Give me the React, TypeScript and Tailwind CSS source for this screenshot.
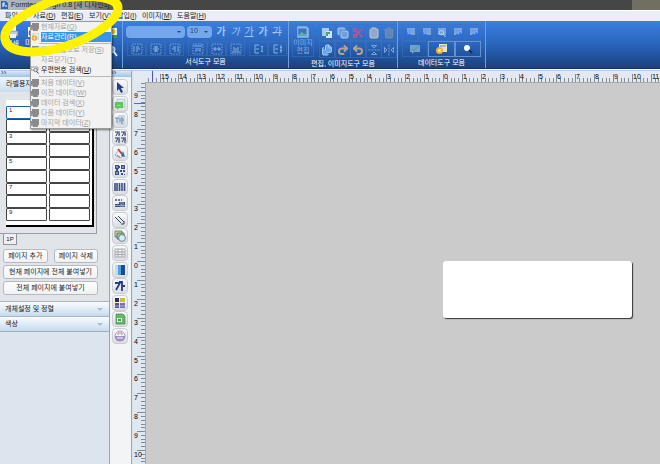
import React, { useEffect, useState } from "react";
import {
  Clipboard,
  Copy,
  Files,
  FlipHorizontal2,
  FlipVertical2,
  Redo2,
  Scissors,
  Trash2,
  Undo2,
} from "lucide-react";

const UNIT = 18.9;

type MenuEntry = { label: string; hotkey: string; icon?: boolean; active?: boolean; enabled?: boolean } | null;

const dataMenu: MenuEntry[] = [
  { label: "현재자료", hotkey: "Q", icon: true },
  { label: "자료관리", hotkey: "R", icon: true, active: true },
  null,
  { label: "다른이름으로 저장", hotkey: "S", icon: true },
  { label: "자료닫기", hotkey: "T" },
  { label: "우편번호 검색", hotkey: "U", icon: true, enabled: true },
  null,
  { label: "처음 데이터", hotkey: "V", icon: true },
  { label: "이전 데이터", hotkey: "W", icon: true },
  { label: "데이터 검색", hotkey: "X", icon: true },
  { label: "다음 데이터", hotkey: "Y", icon: true },
  { label: "마지막 데이터", hotkey: "Z", icon: true },
];

function Hotkey({ text, k }: { text: string; k: string }) {
  return (
    <>
      {text}(<u>{k}</u>)
    </>
  );
}

function EntryIcon({ entry }: { entry: NonNullable<MenuEntry> }) {
  if (!entry.icon) return <span className="w-2" />;
  if (entry.active)
    return (
      <svg viewBox="0 0 8 8" className="size-2">
        <path d="M2 0h6v6H2z" fill="#e8edf4" stroke="#8aa0bc" strokeWidth=".5" />
        <circle cx="3.4" cy="5" r="2.7" fill="#eda72b" />
        <path d="M2 5h3M3.4 3.6v3" stroke="#fff0a0" strokeWidth=".8" />
      </svg>
    );
  if (entry.enabled)
    return (
      <svg viewBox="0 0 8 8" className="size-2">
        <path d="M0 1h7v3H0z" fill="#f9f9f9" stroke="#777" strokeWidth=".7" />
        <circle cx="4.5" cy="4" r="1.7" fill="#e4edf8" stroke="#555" strokeWidth=".7" />
        <path d="m5.6 5.3 2 2.2" stroke="#333" />
      </svg>
    );
  return (
    <svg viewBox="0 0 8 8" className="size-2">
      <path d="M1 0h7v6H7v2H2V7H0V2h1z" fill="#8b8b8b" />
      <path d="M0 6h2M6 7h2" stroke="#bbb" strokeWidth=".7" />
    </svg>
  );
}

function DropMenu() {
  return (
    <div role="menu" className="absolute top-full left-0 z-10 flex w-[82px] flex-col border border-[#9a9a9a] bg-[#f2f2f2] shadow-[1px_1px_2px_rgba(0,0,0,.5)]">
      {dataMenu.map((e, i) =>
        e === null ? (
          <div key={i} className="my-px ml-2 h-px bg-[#b9b9b9]" />
        ) : (
          <button
            key={i}
            role="menuitem"
            className={`flex h-[10px] items-center gap-[2px] text-left whitespace-nowrap ${
              e.active ? "text-white" : e.enabled ? "text-[#222]" : "text-[#a3a3a3]"
            }`}
          >
            <EntryIcon entry={e} />
            <span className={`h-full flex-1 leading-[10px] ${e.active ? "bg-[#3596ec]" : ""}`}>
              <Hotkey text={e.label} k={e.hotkey} />
            </span>
          </button>
        ),
      )}
    </div>
  );
}

function MenuBar() {
  const menus = [
    ["파일", "F"],
    ["자료", "D"],
    ["편집", "E"],
    ["보기", "V"],
    ["삽입", "I"],
    ["이미지", "M"],
    ["도움말", "H"],
  ];
  return (
    <nav className="flex h-[11px] border-t border-white bg-[#e9eef6] pl-[2px] text-[#222]">
      {menus.map(([t, k]) => (
        <div key={t} className={`relative ${t === "이미지" || t === "도움말" ? "w-[35px]" : t === "삽입" ? "w-[25px]" : "w-[28px]"}`}>
          <button className="h-[10px] w-full px-[3px] text-left leading-[10px] whitespace-nowrap">
            <Hotkey text={t} k={k} />
          </button>
          {t === "자료" && <DropMenu />}
        </div>
      ))}
    </nav>
  );
}

function RibbonGroup({ label, className, children }: { label: string; className: string; children: React.ReactNode }) {
  return (
    <section className={`flex shrink-0 flex-col border-r border-[#6c9ee2] ${className}`}>
      <div className="h-[37px]">{children}</div>
      <h2 className="text-center leading-[12px] text-white">{label}</h2>
    </section>
  );
}

const cell = "flex items-center justify-center border border-[#3d72bd]/60";

function AlignIcon({ kind }: { kind: number }) {
  const inner = [
    "M3 3v6M5 4h3M5 6h4M5 8h2",
    "M6 3v6M4 4h4M3 6h6M4 8h4",
    "M9 3v6M4 4h3M3 6h4M5 8h2",
    "M2 3h8M4 5v4M6 5v3M8 5v4",
    "M2 6h8M4 4v4M8 4v4",
    "M2 9h8M4 4v4M6 5v3M8 4v4",
    "M6 2H2v8h4M3 6h3M9 3v6M8 4l1-1 1 1M8 8l1 1 1-1",
    "M6 2H2v8h4M3 6h3M9 2v8M8 4l1 1 1-1M8 8l1-1 1 1",
  ][kind];
  return (
    <svg viewBox="0 0 12 12" className="size-3" fill="none" stroke="#86b2ea">
      {kind < 6 && <path d="M1 1h10v10H1z" strokeDasharray="1.5 1" strokeWidth=".8" />}
      <path d={inner} />
    </svg>
  );
}

function DataIcon({ kind }: { kind: number }) {
  return (
    <svg viewBox="0 0 12 12" className="size-3">
      <path d="M3 1h8v7H3z" fill="#79a6df" />
      <path d="M3 3.5h8M5.5 1v7" stroke="#5f92d6" strokeWidth=".5" />
      {kind === 2 ? (
        <g fill="none" stroke="#b9d2f2">
          <circle cx="6.5" cy="5.5" r="2.2" />
          <path d="m8 7 2.5 3" />
        </g>
      ) : (
        <path d={kind < 2 ? "M7 8H1m0 0 2.5-2.5M1 8l2.5 2.5" : "M5 8h6m0 0L8.5 5.5M11 8l-2.5 2.5"} fill="none" stroke="#2c6ae0" strokeWidth="1.3" />
      )}
      {kind === 0 && <path d="M.5 5v6" stroke="#2c6ae0" />}
      {kind === 4 && <path d="M11.5 5v6" stroke="#2c6ae0" />}
    </svg>
  );
}

function Ribbon() {
  return (
    <div className="flex h-12 overflow-hidden border-b border-[#12346a] bg-linear-to-b from-[#3b7fe0] via-[#2a65bb] to-[#19427f] text-white">
      <RibbonGroup label="" className="w-[123px]">
        <div className="flex h-full items-start pt-1 pl-[3px]">
          <button className="flex w-[19px] flex-col items-center">
            <svg viewBox="0 0 12 14" className="h-[14px] w-3">
              <path d="M3 1h6v5H3z" fill="#fff" />
              <path d="M1 6h10v5H1z" fill="#c3c9d1" stroke="#77808e" strokeWidth=".7" />
              <path d="M3 9h6v4H3z" fill="#eef2f6" />
            </svg>
            <span className="leading-[9px]">인쇄</span>
          </button>
          <button className="flex w-[19px] flex-col items-center">
            <svg viewBox="0 0 12 14" className="h-[14px] w-3">
              <path d="M2 2h7v10H2z" fill="#fff" />
              <circle cx="6" cy="8" r="3" fill="#a9cdf1" stroke="#41536e" />
              <path d="m8 10 3 3" stroke="#41536e" strokeWidth="1.5" />
            </svg>
            <span className="leading-[8px]">미리<br />보기</span>
          </button>
          <div className="ml-auto flex w-[14px] flex-col gap-[2px]">
            <button aria-label="그림" className="flex h-4 items-center">
              <svg viewBox="0 0 10 12" className="h-3 w-[10px]">
                <path d="M2 1h7v10H2z" fill="#e8f2e0" />
                <circle cx="5" cy="4.5" r="2.5" fill="#e6bf27" />
                <path d="M1 8h8v3H1z" fill="#3e9c3a" />
              </svg>
            </button>
            <button aria-label="확대" className="flex h-4 items-center">
              <svg viewBox="0 0 10 12" className="h-3 w-[10px]">
                <circle cx="4" cy="4.5" r="3" fill="#8ab9ee" stroke="#dceaff" />
                <path d="m6 7 3 4" stroke="#fff" strokeWidth="1.5" />
              </svg>
            </button>
          </div>
        </div>
      </RibbonGroup>

      <RibbonGroup label="서식도구 모음" className="w-[166px]">
        <div className="flex h-[20px] items-center gap-[2px] pl-[3px] pt-px">
          <div className="relative flex">
            <select aria-label="글꼴" className="h-3 w-[59px] appearance-none rounded-sm bg-[#75a7ed] text-[#29496f]">
              <option></option>
            </select>
            <span className="pointer-events-none absolute top-[5px] right-1 border-x-2 border-t-2 border-x-transparent border-t-[#24477a]" />
          </div>
          <div className="relative flex">
            <select aria-label="글꼴 크기" className="h-3 w-[25px] appearance-none rounded-sm bg-[#75a7ed] pl-[3px] text-[#29496f]">
              <option>10</option>
            </select>
            <span className="pointer-events-none absolute top-[5px] right-1 border-x-2 border-t-2 border-x-transparent border-t-[#24477a]" />
          </div>
          <div className="flex text-[10px] text-[#a3c5f2]">
            {["font-bold", "italic", "underline", "font-bold", "line-through"].map((c, i) => (
              <button key={i} className={`w-[14px] leading-[12px] ${c}`}>가</button>
            ))}
          </div>
        </div>
        <div className="flex h-[15px] pl-1">
          {[[0, 1, 2], [3, 4, 5], [6, 7]].map((g, gi) => (
            <div key={gi} className="mr-1 flex">
              {g.map((k) => (
                <button key={k} aria-label={`정렬 ${k + 1}`} className={`w-[19px] ${cell}`}>
                  <AlignIcon kind={k} />
                </button>
              ))}
            </div>
          ))}
        </div>
      </RibbonGroup>

      <RibbonGroup label="편집, 이미지도구 모음" className="w-[109px]">
        <div className="flex gap-[5px] pt-[3px] pl-[3px]">
          <button className="flex h-[33px] w-[22px] shrink-0 flex-col items-center border border-[#3d72bd]/60 text-[#86afe6]">
            <svg viewBox="0 0 12 12" className="h-[14px] w-[14px] shrink-0">
              <path d="M1 1h8l2 2v8H1z" fill="#8db4e5" />
              <path d="M2 3h7v6H2z" fill="#3b75c4" />
              <path d="m2 9 3-3 2 2 2-1v2z" fill="#60b39a" />
            </svg>
            <span className="leading-[8px] whitespace-nowrap">이미지<br />편집</span>
          </button>
          <div className="grid grid-cols-5">
            {[
              <svg key="a" viewBox="0 0 12 12" className="size-3"><path d="M1 1h7v8H1z" fill="#a7c9f2" /><path d="M5 4h6v7H5z" fill="#d4e4f8" /><path d="M6 9V6h3" stroke="#47a36b" strokeWidth="2" fill="none" /></svg>,
              <Copy key="b" className="size-3" color="#b0cdf3" fill="#709fdc" />,
              <Scissors key="c" className="size-3" color="#b8588a" strokeWidth={3} />,
              <Clipboard key="d" className="size-3" color="#c3c4c8" fill="#8fa9cc" />,
              <Trash2 key="e" className="size-3" color="#748db5" fill="#6484b4" />,
              <Files key="f" className="size-3" color="#a4c9f4" fill="#6ba4e8" />,
              <Redo2 key="g" className="size-3" color="#b5a294" strokeWidth={4} />,
              <Undo2 key="h" className="size-3" color="#b5a294" strokeWidth={4} />,
              <FlipVertical2 key="i" className="size-3" color="#7ba4da" />,
              <FlipHorizontal2 key="j" className="size-3" color="#7ba4da" />,
            ].map((icon, i) => (
              <button key={i} aria-label={`편집 도구 ${i + 1}`} className={`h-[17px] w-4 ${cell}`}>{icon}</button>
            ))}
          </div>
        </div>
      </RibbonGroup>

      <RibbonGroup label="데이터도구 모음" className="w-[88px]">
        <div className="flex flex-col px-1 pt-[3px]">
          <div className="flex">
            {[0, 1, 2, 3, 4].map((k) => (
              <button key={k} aria-label={`데이터 이동 ${k + 1}`} className={`h-[17px] flex-1 ${cell}`}><DataIcon kind={k} /></button>
            ))}
          </div>
          <div className="flex">
            <button aria-label="현재자료" className={`h-4 flex-1 ${cell}`}>
              <svg viewBox="0 0 12 12" className="size-3"><path d="M1 2h10v7H1z" fill="#72a3cf" /><path d="m3 6 2 2 5-6" fill="none" stroke="#499b88" /><path d="M3 9v2l2-2" fill="#72a3cf" /></svg>
            </button>
            <button aria-label="자료관리" className="flex h-4 flex-1 items-center justify-center border border-[#6492d0]">
              <svg viewBox="0 0 12 12" className="size-3"><path d="M4 1h8v8H4z" fill="#eee3b7" /><path d="M5 3h6" stroke="#5c8fd1" /><circle cx="4.5" cy="7.5" r="3.5" fill="#efb230" /><circle cx="4.5" cy="7.5" r="1.4" fill="#fff0ae" /></svg>
            </button>
            <button aria-label="우편번호 검색" className="flex h-4 flex-1 items-center justify-center border border-[#6492d0]">
              <svg viewBox="0 0 12 12" className="size-3"><circle cx="5" cy="5" r="3" fill="#f4f8ff" /><path d="m7 7 3 3" stroke="#172e50" strokeWidth="1.8" /></svg>
            </button>
          </div>
        </div>
      </RibbonGroup>
    </div>
  );
}

function Strip() {
  return <div className="h-[6px] shrink-0 bg-linear-to-b from-[#d7e8f8] to-[#9fc3e6] pl-px text-[8px] leading-[4px] text-[#174474]">››</div>;
}

const pushButton = "h-[14px] rounded-[3px] border border-[#b6bac0] bg-linear-to-b from-white to-[#eff1f3] leading-[12px] text-[#222]";

function SidePanel() {
  return (
    <aside className="flex w-[110px] shrink-0 flex-col border-r border-[#93a5b9] bg-[#dce4ed]">
      <Strip />
      <h3 className="h-[15px] bg-linear-to-b from-[#eef6fd] to-[#c7dcf0] pl-[6px] leading-[14px] text-[#222]">라벨용지</h3>
      <div className="h-[209px] bg-[#e1e5ea]">
        <div className="mr-3 h-[142px] border-r border-b border-[#9a9ea5] pt-2 pl-[6px]">
          <div className="mr-[2px] h-[127px] border-r-2 border-b-2 border-black bg-white pt-[6px] pr-[2px]">
            <ol className="grid h-[115px] grid-cols-2 grid-rows-9 gap-x-[2px]">
              {Array.from({ length: 18 }, (_, i) => (
                <li
                  key={i}
                  className={`rounded-[1px] border pl-[2px] text-[6px] leading-[7px] text-[#222] ${i === 0 ? "border-[#1d62a5]" : "border-[#444]"}`}
                >
                  {i % 4 === 0 ? i / 2 + 1 : ""}
                </li>
              ))}
            </ol>
          </div>
        </div>
        <button className="ml-[3px] block h-[11px] w-[14px] border border-t-0 border-[#8d9299] bg-[#eef0f3] text-[6px] leading-[9px] text-[#222]">1P</button>
        <div className="mt-[4px] mr-[11px] ml-[3px] grid grid-cols-2 gap-x-[6px] gap-y-[2px]">
          <button className={pushButton}>페이지 추가</button>
          <button className={pushButton}>페이지 삭제</button>
          <button className={`col-span-2 ${pushButton}`}>현재 페이지에 전체 붙여넣기</button>
          <button className={`col-span-2 ${pushButton}`}>전체 페이지에 붙여넣기</button>
        </div>
      </div>
      {["개체설정 및 정렬", "색상"].map((t) => (
        <button key={t} className="flex h-[15px] items-center justify-between border-t border-[#a9b5c3] bg-linear-to-b from-[#fafcfe] to-[#c6dbef] pr-[6px] pl-[5px] text-[#222]">
          {t}
          <span className="border-x-3 border-t-3 border-x-transparent border-t-[#a9bed4]" />
        </button>
      ))}
      <div className="border-t border-[#9fafc1]" />
    </aside>
  );
}

const N = "#3a4f84";
const tools: [string, React.ReactNode][] = [
  ["선택", <path key="0" d="M3 1v9l2-2 2 4 2-1-2-4h3z" fill="#213e8c" />],
  ["그림", <g key="1"><path d="M3 1h8v8H3z" fill="#d9e6f2" stroke="#8ca7be" strokeWidth=".5" /><path d="M1 4h8v6H5l-2 2v-2H1z" fill="#58c94c" /><path d="m3 8 2-1 2 1" stroke="#9be58c" fill="none" /></g>],
  ["문서", <g key="2"><path d="M4 1h7v10H4z" fill="#cbd6e6" /><path d="M1 4h4M3 4v5M6 4v4M8 3v7M8 6h2" stroke="#6f87ab" /></g>],
  ["문자열", <g key="3" stroke="#25396e" fill="none"><path d="M1 1h3L2 5M5 0v5M5 3h1M7 1h3v1L8 5M11 0v5M11 3h1M1 7h3l-2 4M5 6v6M5 9h1M7 7h3v1l-2 3M11 6v6M11 9h1" /></g>],
  ["도형", <g key="4"><path d="m1 8 4-5 4 6-3 2z" fill="#f2f5f9" stroke="#7b8eab" strokeWidth=".7" /><path d="m4 2 4 5" stroke="#c44438" strokeWidth="2" /><path d="m9 4 2 6-4-1z" fill="#376aa4" /><path d="m3 8 3 2" stroke="#d46056" /></g>],
  ["QR 코드", <g key="5" fill={N}><path d="M1 1h4v4H1zM7 1h4v4H7zM1 7h4v4H1zM6 6h2v2H6zM9 6h2v2H9zM7 9h2v2H7zM10 10h1v1h-1zM5 2h1v2H5zM2 5h2v2H2z" /><path d="M2 2h2v2H2zM8 2h2v2H8zM2 8h2v2H2z" fill="#8493ba" /></g>],
  ["바코드", <path key="6" d="M1 2v8M3 2v8M5.5 2v8M8 2v8M10.5 2v8" stroke={N} strokeWidth="1.6" />],
  ["일련번호", <g key="7"><path d="M1 3h2M4 3h2M7 3h1" stroke={N} strokeWidth="1.3" /><path d="M5 5h6v5H5zM1 7h4v3H1z" fill={N} /><path d="M7 5v5M9 5v5M1 8.5h10" stroke="#b4c2dc" strokeWidth=".7" /></g>],
  ["선", <path key="8" d="m1 3 6 6M4 2l6 6M7 10h3V7" stroke="#304168" fill="none" />],
  ["도형 모음", <g key="9" stroke="#496b67" strokeWidth=".8"><path d="M1 1h7v6H1z" fill="#e4d98f" /><path d="M3 3h7v6H3z" fill="#93c2aa" /><circle cx="8" cy="8" r="3.4" fill="#d9edf6" /></g>],
  ["표", <path key="10" d="M1 2h10v8H1zM1 5h10M1 7.5h10M4 2v8M8 2v8" stroke="#a3a8af" fill="#f2f2f2" />],
  ["그라데이션", <g key="11"><path d="M1 1h3v10H1z" fill="#b5e0fb" /><path d="M4 1h3v10H4z" fill="#569fd8" /><path d="M7 1h4v10H7z" fill="#164b9d" /></g>],
  ["글자 꾸미기", <path key="12" d="M1 3h5L2 10M8 1v10M8 6h3M5 2h3" stroke="#233d86" strokeWidth="1.8" fill="none" />],
  ["색상표", <g key="13"><path d="M1 1h4v4H1z" fill="#2b2f4f" /><path d="M6 1h5v4H6z" fill="#c8bd42" /><path d="M1 6h4v5H1z" fill="#5b508e" /><path d="M6 6h5v5H6z" fill="#776eb6" /><path d="M1 9h10" stroke="#ddd" strokeWidth=".6" /></g>],
  ["엑셀", <g key="14"><path d="M2 1h7l2 2v8H2z" fill="#67b767" stroke="#3d8848" strokeWidth=".7" /><path d="M3 5h5v4H3z" fill="#e5f4e0" /><path d="m4 6 3 2M7 6 4 8" stroke="#2d7940" /></g>],
  ["스탬프", <g key="15"><circle cx="6" cy="6" r="5" fill="#f3f0f8" stroke="#8679ae" strokeWidth=".7" /><path d="M1 6h10v2l-2 3H3L1 8z" fill="#9b8fc6" /><path d="M3 8h6" stroke="#fff" /><path d="M4 5V3h4v2" stroke="#c58c8c" fill="none" /></g>],
];

function ToolColumn() {
  return (
    <div className="flex w-[22px] shrink-0 flex-col border-r border-[#9aa5b5] bg-[#f3f4f6]">
      <Strip />
      <div className="mt-[2px] flex h-[265px] flex-col items-center justify-between pr-px">
        {tools.map(([name, art]) => (
          <button key={name} aria-label={name} className="flex h-4 w-4 shrink-0 items-center justify-center rounded-sm border border-[#c9ccd1] bg-linear-to-b from-[#fafafa] to-[#dadde2]">
            <svg viewBox="0 0 12 12" className="size-3">{art}</svg>
          </button>
        ))}
      </div>
    </div>
  );
}

function Ticks({ vertical, origin, length }: { vertical?: boolean; origin: number; length: number }) {
  const first = -Math.floor((origin * 5) / UNIT);
  const last = Math.floor(((length - origin) * 5) / UNIT);
  let d = "";
  for (let n = first; n <= last; n++) {
    const p = Math.round(origin + (n * UNIT) / 5) + 0.5;
    const s = n % 5 === 0 ? 3 : 7;
    d += vertical ? `M${s} ${p}H11` : `M${p} ${s}V11`;
  }
  return <path d={d} stroke="#687284" strokeWidth=".8" />;
}

function rulerMarks(origin: number, length: number, room: number) {
  const marks: { n: number; at: number }[] = [];
  for (let n = -Math.floor(origin / UNIT); Math.round(origin + n * UNIT) + room <= length; n++) {
    marks.push({ n: Math.abs(n), at: Math.round(origin + n * UNIT) });
  }
  return marks;
}

function useWindowSize() {
  const [size, setSize] = useState({ w: window.innerWidth, h: window.innerHeight });
  useEffect(() => {
    const update = () => setSize({ w: window.innerWidth, h: window.innerHeight });
    window.addEventListener("resize", update);
    return () => window.removeEventListener("resize", update);
  }, []);
  return size;
}

function Workspace() {
  const { w, h } = useWindowSize();
  const across = w - 145;
  const down = h - 82;
  return (
    <main className="grid min-w-0 flex-1 grid-cols-[11px_1fr] grid-rows-[11px_1fr] pl-[2px] text-[7px] text-[#222]">
      <div className="bg-[#e4eaf2]" />
      <svg className="h-[11px] w-full overflow-hidden bg-[#e4e9f1]">
        <Ticks origin={298} length={across} />
        {rulerMarks(298, across, 9).map(({ n, at }) => (
          <text key={at} x={at + 1} y="8">{n}</text>
        ))}
        <path d="M7.5 0v11" stroke="#4b54c8" />
      </svg>
      <svg className="h-full w-[11px] overflow-hidden bg-[#dfe7f0]">
        <Ticks vertical origin={179} length={down} />
        {rulerMarks(179, down, 9).map(({ n, at }) => (
          <text key={at} x="0" y={at + 7}>{n}</text>
        ))}
        <path d="M0 21.5h11" stroke="#5966cc" />
      </svg>
      <div className="relative overflow-hidden border-t border-l border-[#a9a9a9] bg-[#cbcbcb]">
        <div className="absolute top-[178px] left-[297px] h-[57px] w-[189px] rounded-[3px] bg-white shadow-[1px_1px_1px_#333]" />
      </div>
    </main>
  );
}

export default function App() {
  return (
    <div className="relative flex min-h-screen flex-col overflow-hidden bg-[#dce4ed] font-['Liberation_Sans','Noto_Sans_CJK_KR',sans-serif] text-[7px]">
      <header className="flex h-[10px] items-center bg-[#464646] text-[#222]">
        <div className="flex items-center gap-[2px] bg-linear-to-r from-[#b4bac2] via-[#9a9c9e] via-70% to-[#464646] pr-3 pl-px">
          <svg viewBox="0 0 8 8" className="size-2">
            <path d="M0 0h5l2 2v6H0z" fill="#2c68b9" />
            <path d="M4 2H2v4M2 4h2M5 4v2" stroke="#fff" fill="none" />
          </svg>
          <h1 className="leading-[10px] whitespace-nowrap">Formtec Design 0.8 [새 디자인1]</h1>
        </div>
        <span className="ml-auto h-full w-7 bg-[#716e62]" />
      </header>
      <MenuBar />
      <Ribbon />
      <div className="h-[2px] border-t border-white bg-[#b9cde3]" />
      <div className="flex flex-1">
        <SidePanel />
        <ToolColumn />
        <Workspace />
      </div>
      <svg viewBox="0 0 130 62" className="pointer-events-none absolute top-0 left-0 z-20 h-[62px] w-[130px]">
        <path
          d="M72 -3C50 -2 26 14 15 21C7 27 4 33 5 39C7 49 18 52 34 52C62 51 94 37 109 23C119 14 121 5 113 1C104 -4 86 -4 72 -3Z"
          fill="none"
          stroke="#fff200"
          strokeWidth="9"
          strokeLinejoin="round"
        />
      </svg>
    </div>
  );
}
